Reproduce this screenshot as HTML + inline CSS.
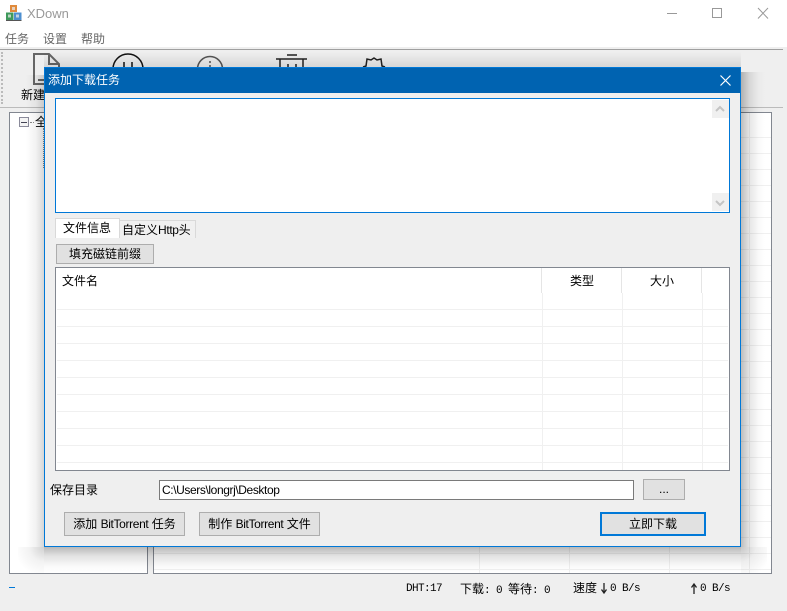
<!DOCTYPE html>
<html><head><meta charset="utf-8">
<style>
html,body{margin:0;padding:0;width:787px;height:611px;overflow:hidden;background:#efefef}
body{position:relative;font:12px "Liberation Sans","WenQuanYi Zen Hei","Noto Sans CJK SC",sans-serif;color:#000}
div,span{position:absolute;box-sizing:border-box;white-space:nowrap}
b{font-weight:normal;font-size:12px;letter-spacing:-.35px}
svg{position:absolute;overflow:visible}
.t{line-height:16px}
.btn{background:#e1e1e1;border:1px solid #adadad;text-align:center}
.hl{left:0;height:1px;background:#f0f0f0}
.vl{top:0;width:1px;background:#f0f0f0}
.mono{font-family:"Liberation Mono","WenQuanYi Zen Hei",monospace;font-size:11px;letter-spacing:-.6px}
.cj{position:static;font-family:"Liberation Sans","WenQuanYi Zen Hei",sans-serif;font-size:12px;letter-spacing:0}
</style></head><body>
<div style="left:0;top:0;width:787px;height:47px;background:#fff"></div>
<svg style="left:6px;top:5px" width="16" height="16" viewBox="0 0 16 16">
<path d="M4 0h7v7H4z" fill="#e08a3c"/><path d="M0 7.500h7.500V15H0z" fill="#3f9a5c"/><path d="M8 7.500h7.500V15H8z" fill="#4d8fd0"/><path d="M6 2h3v3H6zM2 9.500h3v3H2zM10 9.500h3v3h-3z" fill="#e8e8e8" opacity=".75"/><path d="M0 15h15.500v1H0z" fill="#555"/>
</svg>
<div class="t" style="left:27px;top:6px;color:#999;font-size:13px">XDown</div>
<svg style="left:667px;top:8px" width="110" height="12"><path d="M0 5.500h10" stroke="#999"/><rect x="45.500" y="0.500" width="9" height="9" fill="none" stroke="#999"/><path d="M91 0l10 10.500M101 0L91 10.500" stroke="#999"/></svg>
<div class="t" style="left:5px;top:31px;color:#666">任务</div>
<div class="t" style="left:43px;top:31px;color:#666">设置</div>
<div class="t" style="left:81px;top:31px;color:#666">帮助</div>
<div style="left:0;top:49px;width:783px;height:1px;background:#a0a0a0"></div>
<div style="left:0;top:50px;width:787px;height:57px;background:#efefef"></div>
<div style="left:0;top:107px;width:783px;height:1px;background:#bbb"></div>
<div style="left:1px;top:52px;width:2px;height:52px;border-left:2px dotted #bbb"></div>
<svg style="left:33px;top:53px" width="27" height="34" fill="none" stroke="#666" stroke-width="2"><path d="M1 31V1h15l10 10v20z"/><path d="M16 1v10h10"/><path d="M5 27h7" /></svg>
<div class="t" style="left:21px;top:87px">新建</div>
<svg style="left:112px;top:53px" width="32" height="20" fill="none" stroke="#111" stroke-width="1.500"><circle cx="16" cy="16" r="15"/><path d="M12 9v10M20 9v10"/></svg>
<svg style="left:197px;top:56px" width="27" height="20" fill="none" stroke="#555" stroke-width="1.500"><circle cx="13" cy="13" r="12.500"/><path d="M13 5v2M13 9v9"/></svg>
<svg style="left:276px;top:54px" width="32" height="20" fill="none" stroke="#222" stroke-width="1.500"><path d="M11 1h10M0 5h31M4 5v16M27 5v16M12 10v5M20 10v5"/></svg>
<svg style="left:363px;top:57px" width="22" height="20" fill="none" stroke="#222" stroke-width="1.500"><path d="M0 10l3-1 1-7 4 1 3-2 3 2 4-1 1 7 3 1"/></svg>
<div style="left:9px;top:112px;width:139px;height:462px;background:#fff;border:1px solid #828790"></div>
<div style="left:19px;top:117px;width:10px;height:10px;border:1px solid #8a8a9a;background:#f4f4f4"></div>
<div style="left:21px;top:122px;width:6px;height:1px;background:#445"></div>
<div style="left:30px;top:122px;width:4px;height:0;border-top:1px dotted #888"></div>
<div style="left:43px;top:128px;width:0;height:40px;border-left:1px dotted #888"></div>
<div style="left:35px;top:114px" class="t">全</div>
<div style="left:153px;top:112px;width:619px;height:462px;background:#fff;border:1px solid #828790;overflow:hidden" id="r">
<div class="vl" style="left:325px;height:460px"></div><div class="vl" style="left:415px;height:460px"></div><div class="vl" style="left:515px;height:460px"></div><div class="vl" style="left:595px;height:460px"></div>
<div class="hl" style="top:24px;width:617px"></div><div class="hl" style="top:40px;width:617px"></div><div class="hl" style="top:56px;width:617px"></div><div class="hl" style="top:72px;width:617px"></div><div class="hl" style="top:88px;width:617px"></div><div class="hl" style="top:104px;width:617px"></div><div class="hl" style="top:120px;width:617px"></div><div class="hl" style="top:136px;width:617px"></div><div class="hl" style="top:152px;width:617px"></div><div class="hl" style="top:168px;width:617px"></div><div class="hl" style="top:184px;width:617px"></div><div class="hl" style="top:200px;width:617px"></div><div class="hl" style="top:216px;width:617px"></div><div class="hl" style="top:232px;width:617px"></div><div class="hl" style="top:248px;width:617px"></div><div class="hl" style="top:264px;width:617px"></div><div class="hl" style="top:280px;width:617px"></div><div class="hl" style="top:296px;width:617px"></div><div class="hl" style="top:312px;width:617px"></div><div class="hl" style="top:328px;width:617px"></div><div class="hl" style="top:344px;width:617px"></div><div class="hl" style="top:360px;width:617px"></div><div class="hl" style="top:376px;width:617px"></div><div class="hl" style="top:392px;width:617px"></div><div class="hl" style="top:408px;width:617px"></div><div class="hl" style="top:424px;width:617px"></div><div class="hl" style="top:440px;width:617px"></div><div class="hl" style="top:456px;width:617px"></div>
</div>
<div style="left:9px;top:587px;width:6px;height:1px;background:#0078d7"></div>
<div class="t mono" style="left:406px;top:581px">DHT:17</div>
<div class="t mono" style="left:460px;top:581px"><span class="cj">下载</span>: 0 <span class="cj">等待</span>: 0</div>
<div class="t" style="left:573px;top:580px">速度</div>
<svg style="left:601px;top:583px" width="6" height="11" fill="none" stroke="#222" stroke-width="1.300"><path d="M3 0v10M0.500 6.500L3 10l2.500-3.500"/></svg>
<div class="t mono" style="left:610px;top:581px">0 B/s</div>
<svg style="left:691px;top:583px" width="6" height="11" fill="none" stroke="#222" stroke-width="1.300"><path d="M3 11V1M0.500 4.500L3 1l2.500 3.500"/></svg>
<div class="t mono" style="left:700px;top:581px">0 B/s</div>

<div style="left:741px;top:72px;width:24px;height:475px;background:linear-gradient(to right,rgba(0,0,0,.26),rgba(0,0,0,.1) 35%,rgba(0,0,0,.02) 75%,transparent)"></div>
<div style="left:44px;top:547px;width:697px;height:26px;background:linear-gradient(to bottom,rgba(0,0,0,.28),rgba(0,0,0,.11) 35%,rgba(0,0,0,.02) 75%,transparent)"></div>
<div style="left:741px;top:547px;width:26px;height:26px;background:radial-gradient(circle at 0 0,rgba(0,0,0,.22),rgba(0,0,0,.07) 40%,transparent 85%)"></div>
<div style="left:26px;top:75px;width:18px;height:472px;background:linear-gradient(to left,rgba(0,0,0,.16),rgba(0,0,0,.05) 45%,transparent)"></div>
<div style="left:18px;top:547px;width:26px;height:26px;background:radial-gradient(circle at 100% 0,rgba(0,0,0,.18),rgba(0,0,0,.05) 40%,transparent 80%)"></div>
<div style="left:44px;top:52px;width:697px;height:15px;background:linear-gradient(to top,rgba(0,0,0,.1),transparent)"></div>

<div style="left:44px;top:67px;width:697px;height:480px;background:#efefef;border:1px solid #0078d7">
<div style="left:-1px;top:-1px;width:697px;height:26px;background:#0063b1;border:1px solid #0078d7;border-bottom:0"></div>
<div class="t" style="left:3px;top:4px;color:#fff">添加下载任务</div>
<svg style="left:675px;top:7px" width="11" height="11"><path d="M0.500 0.500l10 10M10.500 0.500l-10 10" stroke="#fff" stroke-width="1.200"/></svg>
<div style="left:10px;top:30px;width:675px;height:115px;background:#fff;border:1px solid #0078d7"></div>
<div style="left:667px;top:32px;width:17px;height:18px;background:#f0f0f0"></div>
<div style="left:667px;top:125px;width:17px;height:18px;background:#f0f0f0"></div>
<svg style="left:670px;top:37px" width="10" height="8"><path d="M1 6l4-4 4 4" fill="none" stroke="#c4c4c4" stroke-width="2"/></svg>
<svg style="left:670px;top:131px" width="10" height="8"><path d="M1 2l4 4 4-4" fill="none" stroke="#c4c4c4" stroke-width="2"/></svg>
<div style="left:10px;top:150px;width:65px;height:20px;background:#fff;border:1px solid #d9d9d9;border-bottom:0"></div>
<div class="t" style="left:18px;top:152px">文件信息</div>
<div style="left:75px;top:152px;width:76px;height:18px;background:#f0f0f0;border:1px solid #d9d9d9;border-left:0;border-bottom:0"></div>
<div class="t" style="left:77px;top:154px">自定义<b>Http</b>头</div>
<div class="btn t" style="left:11px;top:176px;width:98px;height:20px;line-height:18px">填充磁链前缀</div>
<div style="left:10px;top:199px;width:675px;height:204px;background:#fff;border:1px solid #828790;overflow:hidden">
<div class="t" style="left:6px;top:5px">文件名</div>
<div class="t" style="left:514px;top:5px">类型</div>
<div class="t" style="left:594px;top:5px">大小</div>
<div style="left:485px;top:0;width:1px;height:25px;background:#e5e5e5"></div>
<div style="left:565px;top:0;width:1px;height:25px;background:#e5e5e5"></div>
<div style="left:645px;top:0;width:1px;height:25px;background:#e5e5e5"></div>
<div class="vl" style="left:486px;top:25px;height:180px"></div><div class="vl" style="left:566px;top:25px;height:180px"></div><div class="vl" style="left:646px;top:25px;height:180px"></div>
<div class="hl" style="top:41px;left:1px;width:671px"></div><div class="hl" style="top:58px;left:1px;width:671px"></div><div class="hl" style="top:75px;left:1px;width:671px"></div><div class="hl" style="top:92px;left:1px;width:671px"></div><div class="hl" style="top:109px;left:1px;width:671px"></div><div class="hl" style="top:126px;left:1px;width:671px"></div><div class="hl" style="top:143px;left:1px;width:671px"></div><div class="hl" style="top:160px;left:1px;width:671px"></div><div class="hl" style="top:177px;left:1px;width:671px"></div><div class="hl" style="top:194px;left:1px;width:671px"></div>
</div>
<div class="t" style="left:5px;top:414px">保存目录</div>
<div class="t" style="left:114px;top:412px;width:475px;height:20px;background:#fff;border:1px solid #7a7a7a;padding-left:2px;line-height:18px;font-size:12px;letter-spacing:-.4px">C:\Users\longrj\Desktop</div>
<div class="btn t" style="left:598px;top:411px;width:42px;height:21px;line-height:19px">...</div>
<div class="btn t" style="left:19px;top:444px;width:121px;height:24px;line-height:22px">添加 <b>BitTorrent</b> 任务</div>
<div class="btn t" style="left:154px;top:444px;width:121px;height:24px;line-height:22px">制作 <b>BitTorrent</b> 文件</div>
<div class="btn t" style="left:555px;top:444px;width:106px;height:24px;line-height:20px;border:2px solid #0078d7">立即下载</div>
</div>
</body></html>
